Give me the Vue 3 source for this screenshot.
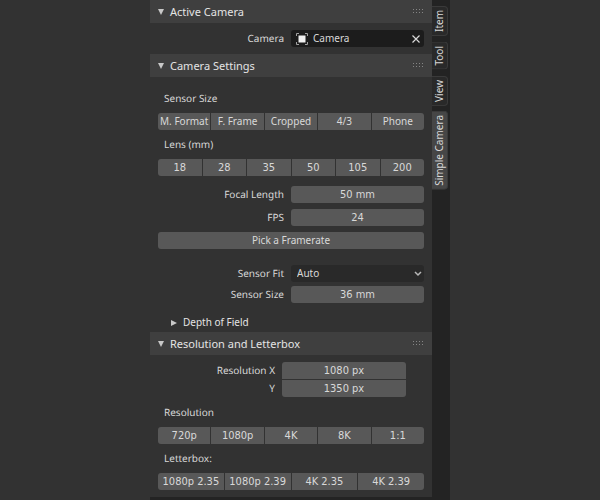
<template>
  <div class="page">
    <main class="sidebar">
      <div class="panels">
        <section>
          <h2 class="panel-header">
            <button type="button" class="toggle">
              <svg class="arrow" viewBox="0 0 8 8"><path d="M1 1h6L4 7z" /></svg>
              Active Camera
            </button>
            <svg class="grip" viewBox="0 0 12 5"><path :d="gripDots" /></svg>
          </h2>
          <div class="panel-body">
            <div class="row">
              <label for="camera">Camera</label>
              <div class="picker">
                <svg class="object-icon" viewBox="0 0 14 14">
                  <path class="corners" d="M1.5 4V1.5H4M10 1.5h2.500V4M12.500 10v2.500H10M4 12.500H1.500V10" />
                  <path class="square" d="M3.500 3.500h7v7h-7z" />
                </svg>
                <input id="camera" v-model="camera" type="text" />
                <button type="button" class="clear" aria-label="Clear camera">
                  <svg viewBox="0 0 8 8"><path d="M.5.5l7 7M7.500.5l-7 7" /></svg>
                </button>
              </div>
            </div>
          </div>
        </section>

        <section>
          <h2 class="panel-header">
            <button type="button" class="toggle">
              <svg class="arrow" viewBox="0 0 8 8"><path d="M1 1h6L4 7z" /></svg>
              Camera Settings
            </button>
            <svg class="grip" viewBox="0 0 12 5"><path :d="gripDots" /></svg>
          </h2>
          <div class="panel-body settings">
            <h3 id="sensor-presets" class="caption">Sensor Size</h3>
            <div class="segments" role="group" aria-labelledby="sensor-presets">
              <button v-for="item in sensors" :key="item" type="button">{{ item }}</button>
            </div>
            <h3 id="lens-presets" class="caption">Lens (mm)</h3>
            <div class="segments numeric" role="group" aria-labelledby="lens-presets">
              <button v-for="item in lenses" :key="item" type="button">{{ item }}</button>
            </div>

            <div class="fields">
              <div class="row">
                <label for="focal">Focal Length</label>
                <input id="focal" v-model="focal" class="number numeric" type="text" />
              </div>
              <div class="row">
                <label for="fps">FPS</label>
                <input id="fps" v-model="fps" class="number numeric" type="text" />
              </div>
              <button type="button" class="wide">Pick a Framerate</button>
            </div>

            <div class="fields tight">
              <div class="row">
                <label for="fit">Sensor Fit</label>
                <div class="select">
                  <select id="fit" v-model="fit">
                    <option>Auto</option>
                    <option>Horizontal</option>
                    <option>Vertical</option>
                  </select>
                  <svg class="chevron" viewBox="0 0 8 6"><path d="M1 1l3 3 3-3" /></svg>
                </div>
              </div>
              <div class="row">
                <label for="sensor">Sensor Size</label>
                <input id="sensor" v-model="sensor" class="number numeric" type="text" />
              </div>
            </div>

            <button type="button" class="toggle sub">
              <svg class="arrow" viewBox="0 0 8 8"><path d="M1 1v6l6-3z" /></svg>
              Depth of Field
            </button>
          </div>
        </section>

        <section>
          <h2 class="panel-header">
            <button type="button" class="toggle">
              <svg class="arrow" viewBox="0 0 8 8"><path d="M1 1h6L4 7z" /></svg>
              Resolution and Letterbox
            </button>
            <svg class="grip" viewBox="0 0 12 5"><path :d="gripDots" /></svg>
          </h2>
          <div class="panel-body">
            <div class="size">
              <div class="row">
                <label for="res-x">Resolution X</label>
                <input id="res-x" v-model="resX" class="number numeric" type="text" />
              </div>
              <div class="row">
                <label for="res-y">Y</label>
                <input id="res-y" v-model="resY" class="number numeric" type="text" />
              </div>
            </div>
            <h3 id="res-presets" class="caption">Resolution</h3>
            <div class="segments numeric" role="group" aria-labelledby="res-presets">
              <button v-for="item in resolutions" :key="item" type="button">{{ item }}</button>
            </div>
            <h3 id="box-presets" class="caption">Letterbox:</h3>
            <div class="segments numeric" role="group" aria-labelledby="box-presets">
              <button v-for="item in letterboxes" :key="item" type="button">{{ item }}</button>
            </div>
          </div>
        </section>
      </div>

      <nav class="tabs">
        <button
          v-for="tab in tabs"
          :key="tab"
          type="button"
          :class="{ active: tab === activeTab }"
          @click="activeTab = tab"
        >{{ tab }}</button>
      </nav>
    </main>
  </div>
</template>

<script setup>
import { ref } from 'vue'

const camera = ref('Camera')
const focal = ref('50 mm')
const fps = ref('24')
const fit = ref('Auto')
const sensor = ref('36 mm')
const resX = ref('1080 px')
const resY = ref('1350 px')

const sensors = ['M. Format', 'F. Frame', 'Cropped', '4/3', 'Phone']
const lenses = [18, 28, 35, 50, 105, 200]
const resolutions = ['720p', '1080p', '4K', '8K', '1:1']
const letterboxes = ['1080p 2.35', '1080p 2.39', '4K 2.35', '4K 2.39']

const tabs = ['Item', 'Tool', 'View', 'Simple Camera']
const activeTab = ref('Simple Camera')

const gripDots = [0, 3, 6, 9].map(x => `M${x} 0h1v1h-1zM${x} 3h1v1h-1z`).join('')
</script>

<style>
body {
  margin: 0;
  background: #323232;
}
</style>

<style scoped>
.page {
  min-height: 100vh;
  display: flex;
  justify-content: center;
  color: #d8d8d8;
  font: 10px/17px "Noto Sans", "DejaVu Sans", sans-serif;
  text-rendering: geometricPrecision;
}

.sidebar {
  display: flex;
  width: 50%;
  min-width: 300px;
  background: #232323;
}

.panels {
  flex: 1;
  min-width: 0;
}

button,
input,
select {
  box-sizing: border-box;
  margin: 0;
  padding: 0;
  border: 0;
  font: inherit;
  color: inherit;
}

svg {
  display: block;
  flex: none;
}

.numeric {
  font-family: "DejaVu Sans Condensed", "DejaVu Sans", sans-serif;
  font-size: 11px;
}

.panel-header {
  display: flex;
  align-items: center;
  justify-content: space-between;
  height: 23px;
  margin: 0;
  padding: 0 7px;
  background: #3f3f3f;
  font-weight: normal;
}

.toggle {
  display: flex;
  align-items: center;
  gap: 5px;
  background: none;
  font-size: 11px;
  color: #e4e4e4;
}

.arrow {
  width: 8px;
  height: 8px;
  fill: #c8c8c8;
}

.grip {
  width: 12px;
  height: 5px;
  fill: #858585;
}

.panel-body {
  padding: 7px 8px;
  background: #323232;
}

.settings {
  padding-bottom: 1px;
}

.row {
  display: grid;
  grid-template-columns: minmax(0, 1fr) minmax(0, 1fr);
  align-items: center;
}

.row label {
  padding-right: 7px;
  text-align: right;
}

.caption {
  margin: 0;
  padding: 6px;
  font-size: 10px;
  font-weight: normal;
}

.segments {
  display: flex;
  gap: 1px;
  border-radius: 3px;
  overflow: hidden;
}

.segments button {
  flex: 1 1 0;
  min-width: 0;
  height: 17px;
  background: #585858;
  white-space: nowrap;
}

.number,
.wide {
  width: 100%;
  height: 17px;
  border-radius: 3px;
  background: #585858;
  text-align: center;
}

.fields {
  display: grid;
  gap: 6px;
  padding-top: 10px;
}

.fields.tight {
  gap: 4px;
  padding-top: 16px;
}

.picker,
.select {
  display: flex;
  align-items: center;
  height: 17px;
  border-radius: 3px;
  background: #1c1c1c;
}

.picker {
  gap: 4px;
  padding: 0 4px;
}

.picker input {
  flex: 1;
  min-width: 0;
  background: none;
}

.object-icon {
  width: 14px;
  height: 14px;
}

.corners {
  fill: none;
  stroke: #a0a0a0;
}

.square {
  fill: #f0f0f0;
}

.clear {
  background: none;
}

.clear svg {
  width: 8px;
  height: 8px;
  fill: none;
  stroke: #d8d8d8;
  stroke-width: 1.2;
}

.select {
  display: grid;
  background: #292929;
}

.select select,
.select .chevron {
  grid-area: 1 / 1;
}

.select select {
  appearance: none;
  width: 100%;
  height: 17px;
  padding-left: 6px;
  background: none;
}

.chevron {
  width: 8px;
  height: 6px;
  margin-right: 2px;
  justify-self: end;
  fill: none;
  stroke: #b8b8b8;
  stroke-width: 1.5;
  pointer-events: none;
}

.toggle.sub {
  margin-top: 11px;
  padding-left: 12px;
  font-size: 10px;
}

.size {
  display: grid;
  gap: 1px;
  padding-bottom: 1px;
}

.size .row {
  padding-right: 18px;
}

.size .row:first-child .number {
  border-radius: 3px 3px 0 0;
}

.size .row:last-child .number {
  border-radius: 0 0 3px 3px;
}

.tabs {
  display: flex;
  flex-direction: column;
  gap: 6px;
  width: 18px;
  padding-top: 6px;
}

/* sides are mirrored: the buttons are turned to read upwards */
.tabs button {
  width: 16px;
  padding: 3px 0;
  border: 1px solid #3a3a3a;
  border-right: 0;
  border-radius: 4px 0 0 4px;
  background: #292929;
  line-height: 15px;
  writing-mode: vertical-rl;
  rotate: 180deg;
  white-space: nowrap;
}

.tabs .active {
  background: #464646;
}
</style>
